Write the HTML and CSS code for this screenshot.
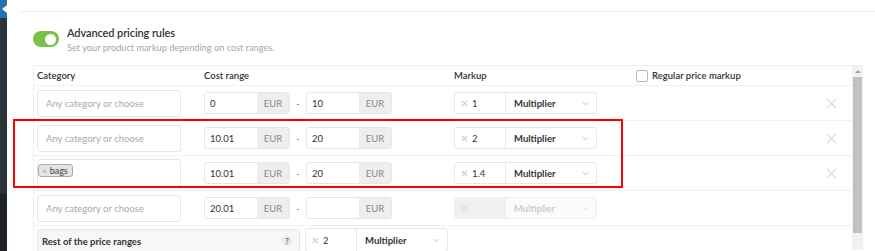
FILE: index.html
```html
<!DOCTYPE html>
<html>
<head>
<meta charset="utf-8">
<link rel="stylesheet" href="styles.css">
</head>
<body>
<div class="page">
  <aside class="sidebar">
    <div class="sb-active"><span class="sb-arrow"></span></div>
    <div class="sb-mid"></div>
    <div class="sb-bottom"></div>
  </aside>
  <main class="content">
    <div class="topline"></div>
    <div class="toggle-row">
      <span class="switch"><span class="knob"></span></span>
      <div class="toggle-text">
        <div class="title">Advanced pricing rules</div>
        <div class="subtitle">Set your product markup depending on cost ranges.</div>
      </div>
    </div>
    <div class="table-wrap">
      <div class="table">
        <div class="row head">
          <div class="hcell">Category</div>
          <div class="hcell">Cost range</div>
          <div class="hcell">Markup</div>
          <div class="hcell regular"><span class="checkbox"></span>Regular price markup</div>
        </div>

        <div class="row">
          <div class="cat-input"><span class="placeholder">Any category or choose</span></div>
          <div class="range">
            <div class="cost-group"><span class="val">0</span><span class="addon">EUR</span></div>
            <span class="dash">-</span>
            <div class="cost-group"><span class="val">10</span><span class="addon">EUR</span></div>
          </div>
          <div class="markup">
            <span class="mval"><svg class="times" viewBox="0 0 8 8"><path d="M1 1L7 7M7 1L1 7"/></svg>1</span>
            <span class="msel">Multiplier<svg class="chev" viewBox="0 0 8 5"><path d="M1 1L4 4L7 1"/></svg></span>
          </div>
          <div class="del"><svg viewBox="0 0 12 12"><path d="M1 1L11 11M11 1L1 11"/></svg></div>
        </div>

        <div class="row">
          <div class="cat-input"><span class="placeholder">Any category or choose</span></div>
          <div class="range">
            <div class="cost-group"><span class="val">10.01</span><span class="addon">EUR</span></div>
            <span class="dash">-</span>
            <div class="cost-group"><span class="val">20</span><span class="addon">EUR</span></div>
          </div>
          <div class="markup">
            <span class="mval"><svg class="times" viewBox="0 0 8 8"><path d="M1 1L7 7M7 1L1 7"/></svg>2</span>
            <span class="msel">Multiplier<svg class="chev" viewBox="0 0 8 5"><path d="M1 1L4 4L7 1"/></svg></span>
          </div>
          <div class="del"><svg viewBox="0 0 12 12"><path d="M1 1L11 11M11 1L1 11"/></svg></div>
        </div>

        <div class="row">
          <div class="cat-input tags"><span class="tag"><span class="tag-x">×</span>bags</span></div>
          <div class="range">
            <div class="cost-group"><span class="val">10.01</span><span class="addon">EUR</span></div>
            <span class="dash">-</span>
            <div class="cost-group"><span class="val">20</span><span class="addon">EUR</span></div>
          </div>
          <div class="markup">
            <span class="mval"><svg class="times" viewBox="0 0 8 8"><path d="M1 1L7 7M7 1L1 7"/></svg>1.4</span>
            <span class="msel">Multiplier<svg class="chev" viewBox="0 0 8 5"><path d="M1 1L4 4L7 1"/></svg></span>
          </div>
          <div class="del"><svg viewBox="0 0 12 12"><path d="M1 1L11 11M11 1L1 11"/></svg></div>
        </div>

        <div class="row">
          <div class="cat-input"><span class="placeholder">Any category or choose</span></div>
          <div class="range">
            <div class="cost-group"><span class="val">20.01</span><span class="addon">EUR</span></div>
            <span class="dash">-</span>
            <div class="cost-group"><span class="val"></span><span class="addon">EUR</span></div>
          </div>
          <div class="markup disabled">
            <span class="mval"><svg class="times" viewBox="0 0 8 8"><path d="M1 1L7 7M7 1L1 7"/></svg></span>
            <span class="msel">Multiplier<svg class="chev" viewBox="0 0 8 5"><path d="M1 1L4 4L7 1"/></svg></span>
          </div>
          <div class="del"></div>
        </div>

        <div class="rest-row">
          <div class="rest-box"><span>Rest of the price ranges</span><span class="help">?</span></div>
          <div class="markup">
            <span class="mval"><svg class="times" viewBox="0 0 8 8"><path d="M1 1L7 7M7 1L1 7"/></svg>2</span>
            <span class="msel">Multiplier<svg class="chev" viewBox="0 0 8 5"><path d="M1 1L4 4L7 1"/></svg></span>
          </div>
        </div>
      </div>
      <div class="scrollbar"><span class="sb-up"></span><span class="thumb"></span></div>
    </div>
  </main>
  <div class="highlight"></div>
</div>
</body>
</html>
```

FILE: styles.css
```css
* { box-sizing: border-box; }
html, body { margin: 0; padding: 0; background: #fff; }
body {
  font-family: "Lato", "Open Sans", sans-serif;
  color: #333;
  font-size: 10px;
}
.page {
  position: relative;
  display: flex;
  width: 875px;
  height: 251px;
  overflow: hidden;
}
.sidebar {
  width: 7px;
  flex: none;
  display: flex;
  flex-direction: column;
}
.sb-active {
  height: 18px;
  background: #2271b1;
  position: relative;
}
.sb-arrow {
  position: absolute;
  right: 0;
  top: 5px;
  width: 0;
  height: 0;
  border-top: 4px solid transparent;
  border-bottom: 4px solid transparent;
  border-right: 5px solid #fff;
}
.sb-mid { height: 176px; background: #2c3338; }
.sb-bottom { flex: 1; background: #1d2327; }

.content {
  flex: 1;
  padding-left: 13px;
}
.topline {
  height: 12px;
  border-bottom: 1px solid #eef0f3;
}
.toggle-row {
  display: flex;
  margin-top: 14px;
  margin-left: 13px;
  align-items: flex-start;
}
.switch {
  width: 26px;
  height: 16px;
  margin-top: 5px;
  border-radius: 8px;
  background: #78c24a;
  position: relative;
  flex: none;
}
.knob {
  position: absolute;
  right: 3px;
  top: 2.5px;
  width: 11px;
  height: 11px;
  border-radius: 50%;
  background: #fff;
}
.toggle-text { margin-left: 8px; }
.title {
  font-size: 11px;
  line-height: 14px;
  font-weight: 600;
  color: #333;
  letter-spacing: -0.1px;
}
.subtitle {
  font-size: 9.2px;
  line-height: 12px;
  color: #a5a5a5;
  margin-top: 2px;
}

.table-wrap {
  display: flex;
  margin-top: 11px;
  margin-left: 13px;
}
.table {
  width: 819px;
  border-left: 1px solid #eef0f3;
  border-top: 1px solid #eef0f3;
}
.row {
  display: grid;
  grid-template-columns: 167px 250px 182px 1fr;
  align-items: center;
  height: 35px;
  padding-left: 3px;
  border-bottom: 1px solid #eef0f3;
}
.row.head { height: 20px; }
.hcell {
  font-size: 9.5px;
  font-weight: 600;
  color: #333;
}
.regular {
  display: flex;
  align-items: center;
  font-weight: 600;
}
.checkbox {
  width: 12px;
  height: 12px;
  border: 1px solid #b8b8b8;
  border-radius: 2px;
  margin-right: 4px;
  background: #fff;
}
.cat-input {
  width: 144px;
  height: 27px;
  border: 1px solid #e4e7eb;
  border-radius: 3px;
  display: flex;
  align-items: center;
  padding-left: 8px;
}
.placeholder { color: #aaa; font-size: 9.5px; }
.cat-input.tags {
  align-items: flex-start;
  padding: 4px 0 0 0;
  height: 28px;
}
.tag {
  display: inline-flex;
  align-items: center;
  height: 13px;
  padding: 0 4px 0 3px;
  background: #e4e4e4;
  border: 1px solid #aaa;
  border-radius: 3px;
  font-size: 9px;
  color: #444;
}
.tag-x { color: #999; font-size: 8px; margin-right: 3px; }
.range {
  display: flex;
  align-items: center;
}
.cost-group {
  display: flex;
  width: 86px;
  height: 22px;
  border: 1px solid #e4e7eb;
  border-radius: 3px;
  overflow: hidden;
}
.val {
  flex: 1;
  display: flex;
  align-items: center;
  padding-left: 5px;
  font-size: 9.5px;
  color: #333;
}
.addon {
  width: 32px;
  display: flex;
  align-items: center;
  justify-content: center;
  background: #eeeeee;
  color: #888;
  font-size: 9.5px;
}
.dash {
  width: 16px;
  text-align: center;
  color: #777;
  font-size: 9px;
}
.markup {
  display: flex;
  width: 143px;
  height: 22px;
  border: 1px solid #e4e7eb;
  border-radius: 3px;
  overflow: hidden;
}
.mval {
  width: 51px;
  display: flex;
  align-items: center;
  padding-left: 6px;
  border-right: 1px solid #e4e7eb;
  font-size: 9.5px;
  color: #333;
}
.times {
  width: 7px;
  height: 7px;
  margin-right: 4px;
  fill: none;
  stroke: #c2cad4;
  stroke-width: 1.2;
}
.msel {
  flex: 1;
  display: flex;
  align-items: center;
  padding-left: 8px;
  font-size: 9.5px;
  font-weight: 700;
  color: #333;
}
.chev {
  width: 7px;
  height: 5px;
  margin-left: auto;
  margin-right: 7px;
  fill: none;
  stroke: #b5bcc5;
  stroke-width: 1;
}
.markup.disabled .mval { background: #f0f0f0; border-right-color: #f0f0f0; }
.markup.disabled .msel { background: #fbfbfb; color: #c8c8c8; font-weight: 600; }
.markup.disabled { border-color: #f0f0f0; }
.markup.disabled .times { stroke: #dcdcdc; }
.markup.disabled .chev { stroke: #dadada; }
.del {
  justify-self: end;
  margin-right: 15px;
  width: 11px;
  height: 11px;
  display: flex;
}
.del svg {
  width: 11px;
  height: 11px;
  fill: none;
  stroke: #d3dae3;
  stroke-width: 1.3;
}
.rest-row {
  display: flex;
  align-items: flex-start;
  padding: 2px 0 0 3px;
  gap: 5px;
}
.rest-row .markup { height: 24px; }
.rest-box {
  width: 263px;
  height: 24px;
  margin-top: 1px;
  display: flex;
  align-items: center;
  justify-content: space-between;
  padding: 0 7px 0 4px;
  background: #f7f7f7;
  border: 1px solid #e6e6e6;
  border-radius: 3px;
  font-size: 9.5px;
  font-weight: 700;
  color: #333;
}
.help {
  width: 10px;
  height: 10px;
  border-radius: 50%;
  background: #e8e8e8;
  font-size: 7px;
  font-weight: 700;
  display: flex;
  align-items: center;
  justify-content: center;
  color: #555;
}
.scrollbar {
  width: 11px;
  background: #f1f1f1;
  display: flex;
  flex-direction: column;
  align-items: center;
  height: 185px;
}
.sb-up {
  margin-top: 5px;
  width: 0;
  height: 0;
  border-left: 3px solid transparent;
  border-right: 3px solid transparent;
  border-bottom: 3px solid #a3a3a3;
}
.thumb {
  margin-top: 4px;
  width: 9px;
  height: 156px;
  background: #c1c1c1;
}
.highlight {
  position: absolute;
  left: 13px;
  top: 119px;
  width: 610px;
  height: 69px;
  border: 2px solid #ff0000;
  pointer-events: none;
}
```
